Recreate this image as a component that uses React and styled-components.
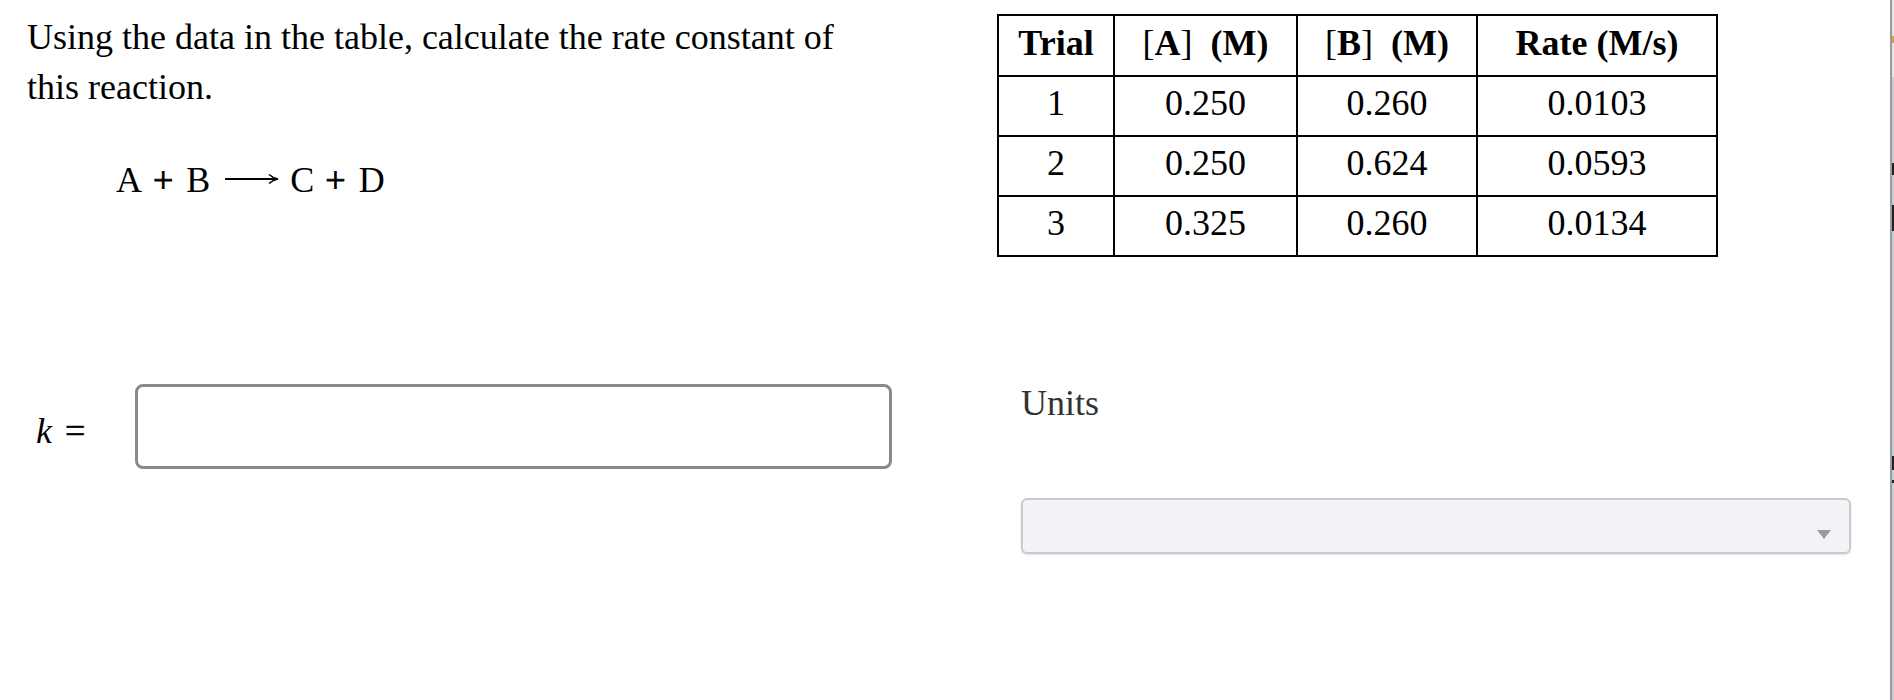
import React from "react";
import styled, { createGlobalStyle } from "styled-components";

const Global = createGlobalStyle`
  html, body { margin: 0; padding: 0; background: #fff; }
  body { font-family: "Liberation Serif", "Times New Roman", serif; color: #000; }
  * { box-sizing: border-box; }
`;

const Page = styled.div`
  display: flex;
  width: 1894px;
  height: 700px;
  overflow: hidden;
`;

const Main = styled.main`
  flex: 1;
  display: flex;
  flex-direction: column;
  background: #fff;
`;

const TopRow = styled.section`
  display: grid;
  grid-template-columns: 970px 719px;
  align-items: start;
  padding: 12px 0 0 27px;
`;

const Question = styled.div`
  display: flex;
  flex-direction: column;
`;

const Prompt = styled.p`
  margin: 0;
  width: 840px;
  font-size: 36px;
  line-height: 50px;
`;

const Equation = styled.div`
  display: flex;
  align-items: baseline;
  margin-top: 43px;
  padding-left: 89px;
  font-size: 36px;
  line-height: 50px;
`;

const Sym = styled.span`
  margin-right: ${(p) => p.$gap ?? 11}px;
  -webkit-text-stroke: ${(p) => (p.$op ? "0.8px #000" : "0")};
`;

const ArrowWrap = styled.span`
  display: inline-flex;
  margin-right: 11px;
  margin-left: 1px;
  align-self: center;
  transform: translateY(-1px);
`;

const DataTable = styled.table`
  border-collapse: collapse;
  table-layout: fixed;
  width: 719px;
  margin-top: 2px;
  font-size: 36px;
`;

const Col = styled.col`
  width: ${(p) => p.$w}px;
`;

const HeadCell = styled.th`
  border: 2px solid #000;
  height: 61px;
  padding: 0 0 6px;
  text-align: center;
  font-weight: 700;
  white-space: pre;
`;

const Cell = styled.td`
  border: 2px solid #000;
  height: 60px;
  padding: 0 0 6px;
  text-align: center;
  font-weight: 400;
`;

const Light = styled.span`
  font-weight: 400;
`;

const BottomRow = styled.section`
  display: grid;
  grid-template-columns: 985px 830px;
  align-items: start;
  margin-top: 124px;
  padding-left: 36px;
`;

const KField = styled.div`
  display: flex;
  align-items: center;
  margin-top: 3px;
`;

const KLabel = styled.label`
  width: 99px;
  padding-top: 9px;
  font-size: 36px;
  white-space: nowrap;
`;

const Var = styled.i`
  font-style: italic;
  margin-right: 13px;
`;

const Equals = styled.span`
  -webkit-text-stroke: 0.6px #000;
`;

const AnswerBox = styled.input`
  width: 757px;
  height: 85px;
  border: 3px solid #8a8a8a;
  border-radius: 8px;
  background: #fff;
  outline: none;
  font-size: 28px;
  padding: 0 14px;
`;

const UnitsColumn = styled.div`
  display: flex;
  flex-direction: column;
`;

const UnitsLabel = styled.div`
  margin-top: -3px;
  font-size: 36px;
  line-height: 50px;
  color: #333;
`;

const SelectBox = styled.div`
  position: relative;
  margin-top: 70px;
  width: 830px;
  height: 56px;
  background: #f2f3f6;
  border: 2px solid #cbcbcd;
  border-radius: 6px;
  box-shadow: 0 1px 2px rgba(0, 0, 0, 0.12);
`;

const Caret = styled.span`
  position: absolute;
  right: 18px;
  top: 30px;
  width: 0;
  height: 0;
  border-left: 7px solid transparent;
  border-right: 7px solid transparent;
  border-top: 9px solid #9b9b9b;
`;

const SideEdge = styled.aside`
  width: 4px;
  height: 700px;
  border-left: 2px solid #9a9a9a;
  background: linear-gradient(
    to bottom,
    #e4e4e4 0px,
    #e4e4e4 36px,
    #d4a24a 36px,
    #d4a24a 43px,
    #e4e4e4 43px,
    #e4e4e4 77px,
    #c7cfd3 77px,
    #c7cfd3 100%
  );
  display: flex;
  flex-direction: column;
`;

const EdgeMark = styled.span`
  display: block;
  width: 2px;
  height: ${(p) => p.$h}px;
  margin-top: ${(p) => p.$t}px;
  background: #222;
`;

function Arrow() {
  return (
    <svg width="54" height="14" viewBox="0 0 54 14">
      <line x1="0" y1="7" x2="51" y2="7" stroke="#000" strokeWidth="1.8" />
      <path d="M44 2.5 Q48 6 53 7 Q48 8 44 11.5" fill="none" stroke="#000" strokeWidth="1.6" />
    </svg>
  );
}

const rows = [
  ["1", "0.250", "0.260", "0.0103"],
  ["2", "0.250", "0.624", "0.0593"],
  ["3", "0.325", "0.260", "0.0134"],
];

export default function App() {
  return (
    <>
      <Global />
      <Page>
        <Main>
          <TopRow>
            <Question>
              <Prompt>
                Using the data in the table, calculate the rate constant of this reaction.
              </Prompt>
              <Equation>
                <Sym>A</Sym>
                <Sym $op $gap={13}>+</Sym>
                <Sym $gap={14}>B</Sym>
                <ArrowWrap>
                  <Arrow />
                </ArrowWrap>
                <Sym>C</Sym>
                <Sym $op $gap={13}>+</Sym>
                <Sym $gap={0}>D</Sym>
              </Equation>
            </Question>
            <DataTable>
              <colgroup>
                <Col $w={116} />
                <Col $w={183} />
                <Col $w={180} />
                <Col $w={240} />
              </colgroup>
              <thead>
                <tr>
                  <HeadCell>Trial</HeadCell>
                  <HeadCell>
                    <Light>[</Light>A<Light>]</Light>{"  "}(M)
                  </HeadCell>
                  <HeadCell>
                    <Light>[</Light>B<Light>]</Light>{"  "}(M)
                  </HeadCell>
                  <HeadCell>Rate (M/s)</HeadCell>
                </tr>
              </thead>
              <tbody>
                {rows.map((r) => (
                  <tr key={r[0]}>
                    {r.map((v, i) => (
                      <Cell key={i}>{v}</Cell>
                    ))}
                  </tr>
                ))}
              </tbody>
            </DataTable>
          </TopRow>
          <BottomRow>
            <KField>
              <KLabel htmlFor="k-answer">
                <Var>k</Var>
                <Equals>=</Equals>
              </KLabel>
              <AnswerBox id="k-answer" type="text" />
            </KField>
            <UnitsColumn>
              <UnitsLabel>Units</UnitsLabel>
              <SelectBox role="combobox" aria-label="Units">
                <Caret />
              </SelectBox>
            </UnitsColumn>
          </BottomRow>
        </Main>
        <SideEdge>
          <EdgeMark $t={163} $h={12} />
          <EdgeMark $t={30} $h={26} />
          <EdgeMark $t={225} $h={14} />
          <EdgeMark $t={10} $h={3} />
        </SideEdge>
      </Page>
    </>
  );
}
